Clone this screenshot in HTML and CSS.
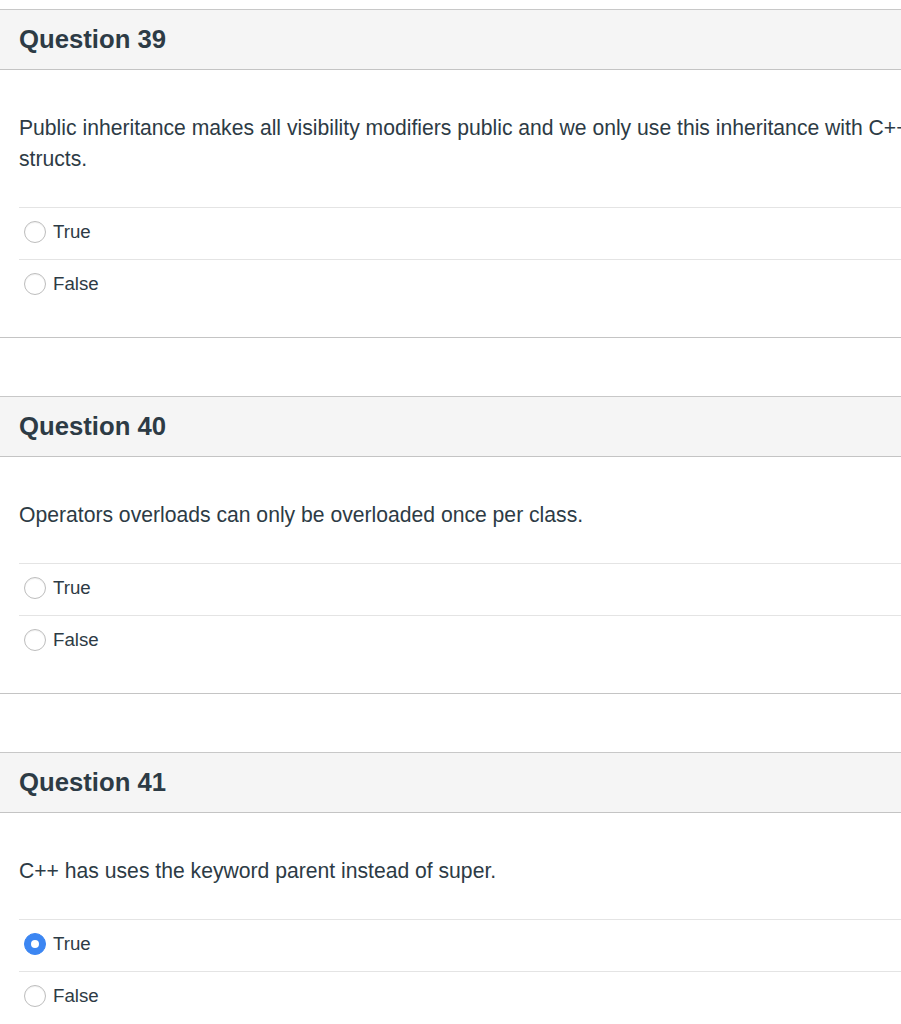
FILE: index.html
```html
<!DOCTYPE html>
<html lang="en">
<head>
<meta charset="utf-8">
<title>Quiz</title>
<link rel="stylesheet" href="styles.css">
</head>
<body>
<div class="quiz">
  <section class="question">
    <div class="q-header"><h2 class="q-title">Question 39</h2></div>
    <div class="q-body">
      <p class="q-text">Public inheritance makes all visibility modifiers public and we only use this inheritance with C++ structs.</p>
      <div class="answers">
        <label class="answer"><span class="radio"></span><span class="answer-label">True</span></label>
        <label class="answer"><span class="radio"></span><span class="answer-label">False</span></label>
      </div>
    </div>
  </section>
  <section class="question">
    <div class="q-header"><h2 class="q-title">Question 40</h2></div>
    <div class="q-body">
      <p class="q-text">Operators overloads can only be overloaded once per class.</p>
      <div class="answers">
        <label class="answer"><span class="radio"></span><span class="answer-label">True</span></label>
        <label class="answer"><span class="radio"></span><span class="answer-label">False</span></label>
      </div>
    </div>
  </section>
  <section class="question">
    <div class="q-header"><h2 class="q-title">Question 41</h2></div>
    <div class="q-body">
      <p class="q-text">C++ has uses the keyword parent instead of super.</p>
      <div class="answers">
        <label class="answer"><span class="radio checked"></span><span class="answer-label">True</span></label>
        <label class="answer"><span class="radio"></span><span class="answer-label">False</span></label>
      </div>
    </div>
  </section>
</div>
</body>
</html>
```
FILE: styles.css
```css
html, body {
  margin: 0;
  padding: 0;
  overflow: hidden;
  background: #ffffff;
}

body {
  font-family: "Liberation Sans", Arial, Helvetica, sans-serif;
  color: #2d3b45;
}

.quiz {
  width: 930px;
  padding-top: 9px;
  display: flex;
  flex-direction: column;
  gap: 58px;
}

.question {
  border-bottom: 1px solid #c4c4c4;
}

.q-header {
  height: 59px;
  background: #f5f5f5;
  border-top: 1px solid #c8c8c8;
  border-bottom: 1px solid #c4c4c4;
  display: flex;
  align-items: center;
  padding-left: 19px;
}

.q-title {
  margin: 0;
  font-size: 25.7px;
  font-weight: bold;
  line-height: 1;
  color: #2d3b45;
}

.q-body {
  padding: 42px 0 26px 19px;
}

.q-text {
  margin: 0 0 33px;
  font-size: 21.15px;
  line-height: 31px;
}

.answer {
  display: flex;
  align-items: center;
  gap: 7px;
  height: 48px;
  padding: 0 0 3px 5px;
  border-top: 1px solid #e4e4e4;
}

.radio {
  width: 20px;
  height: 20px;
  border-radius: 50%;
  border: 1px solid #bdbdbd;
  background: #ffffff;
  box-shadow: inset 0 1px 1px rgba(0, 0, 0, 0.06);
  flex: none;
  position: relative;
}

.radio.checked {
  background: #3c86f2;
  border-color: #3c86f2;
  box-shadow: none;
}

.radio.checked::after {
  content: "";
  position: absolute;
  left: 6px;
  top: 6px;
  width: 8px;
  height: 8px;
  border-radius: 50%;
  background: #ffffff;
}

.answer-label {
  font-size: 18.7px;
  line-height: 22px;
}
```
